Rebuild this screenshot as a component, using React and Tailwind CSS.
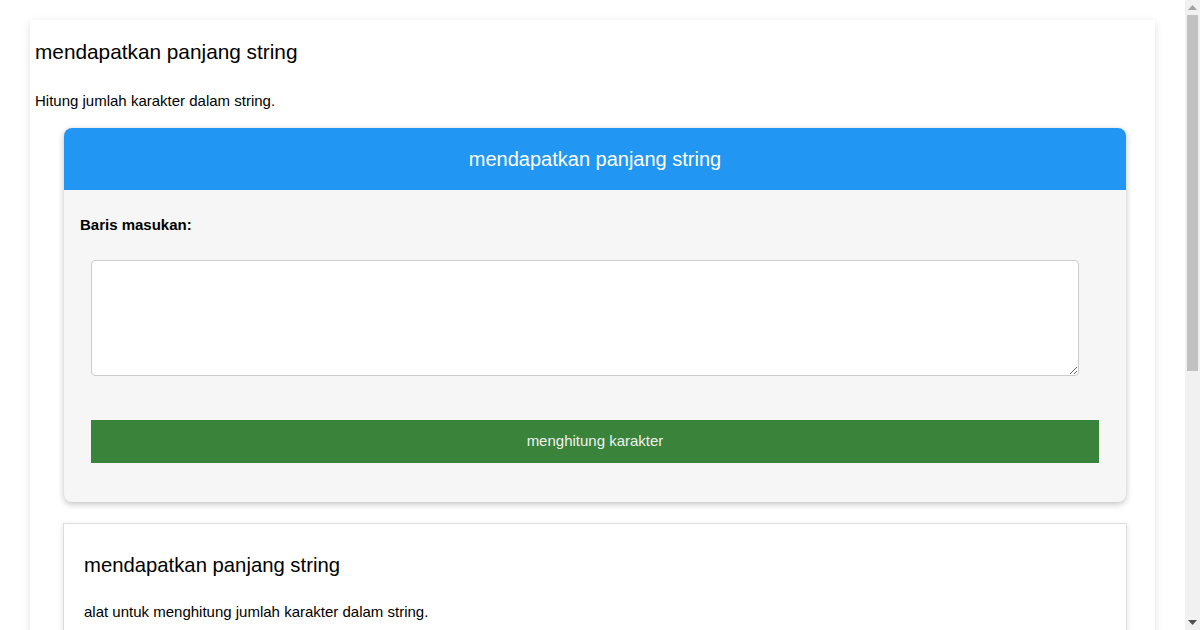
function Scrollbar() {
  return (
    <div className="flex h-full w-[15px] shrink-0 flex-col items-center bg-[#f1f1f1]">
      <div className="flex h-[15px] w-full items-center justify-center">
        <svg width="9" height="5" viewBox="0 0 9 5">
          <polygon points="4.5,0 9,5 0,5" fill="#a3a3a3" />
        </svg>
      </div>
      <div className="h-[356px] w-[11px] bg-[#c1c1c1]"></div>
      <div className="flex-1"></div>
      <div className="flex h-[15px] w-full items-center justify-center">
        <svg width="9" height="5" viewBox="0 0 9 5">
          <polygon points="0,0 9,0 4.5,5" fill="#505050" />
        </svg>
      </div>
    </div>
  );
}

export default function App() {
  return (
    <div className="flex h-[630px] overflow-hidden bg-white font-['Liberation_Sans',Arial,sans-serif] text-black">
      <div className="flex-1 overflow-hidden pt-5">
        <div className="mx-[30px] bg-white px-[5px] pt-[17px] pb-10 shadow-[0_2px_8px_rgba(0,0,0,0.12)]">
          <h1 className="text-[20.8px] leading-[30px]">mendapatkan panjang string</h1>
          <p className="mt-[24px] text-[15px] leading-[20px]">Hitung jumlah karakter dalam string.</p>

          <div className="mt-[17px] mr-[24px] ml-[29px] overflow-hidden rounded-lg bg-[#f6f6f6] shadow-[0_2px_6px_rgba(0,0,0,0.25)]">
            <div className="flex h-[62px] items-center justify-center bg-[#2196f3] text-[20px] text-white">
              mendapatkan panjang string
            </div>
            <div className="px-4 pt-[25px] pb-[39px]">
              <label className="block text-[15px] font-bold leading-[20px]">Baris masukan:</label>
              <div className="mt-[25px] pl-[11px]">
                <textarea className="block h-[116px] w-[988px] resize-y rounded border border-[#cccccc] bg-white"></textarea>
              </div>
              <div className="mt-[44px] pl-[11px]">
                <button className="h-[43px] w-[1008px] bg-[#3a833a] text-[15px] text-[#f0f0f0]">menghitung karakter</button>
              </div>
            </div>
          </div>

          <div className="mt-[21px] mr-[23px] ml-[28px] min-h-[500px] border border-[#dddddd] bg-white px-5 pt-[26px] shadow-[0_2px_6px_rgba(0,0,0,0.12)]">
            <h2 className="text-[20.3px] leading-[30px]">mendapatkan panjang string</h2>
            <p className="mt-[22px] text-[15px] leading-[20px]">alat untuk menghitung jumlah karakter dalam string.</p>
          </div>
        </div>
      </div>
      <Scrollbar />
    </div>
  );
}
